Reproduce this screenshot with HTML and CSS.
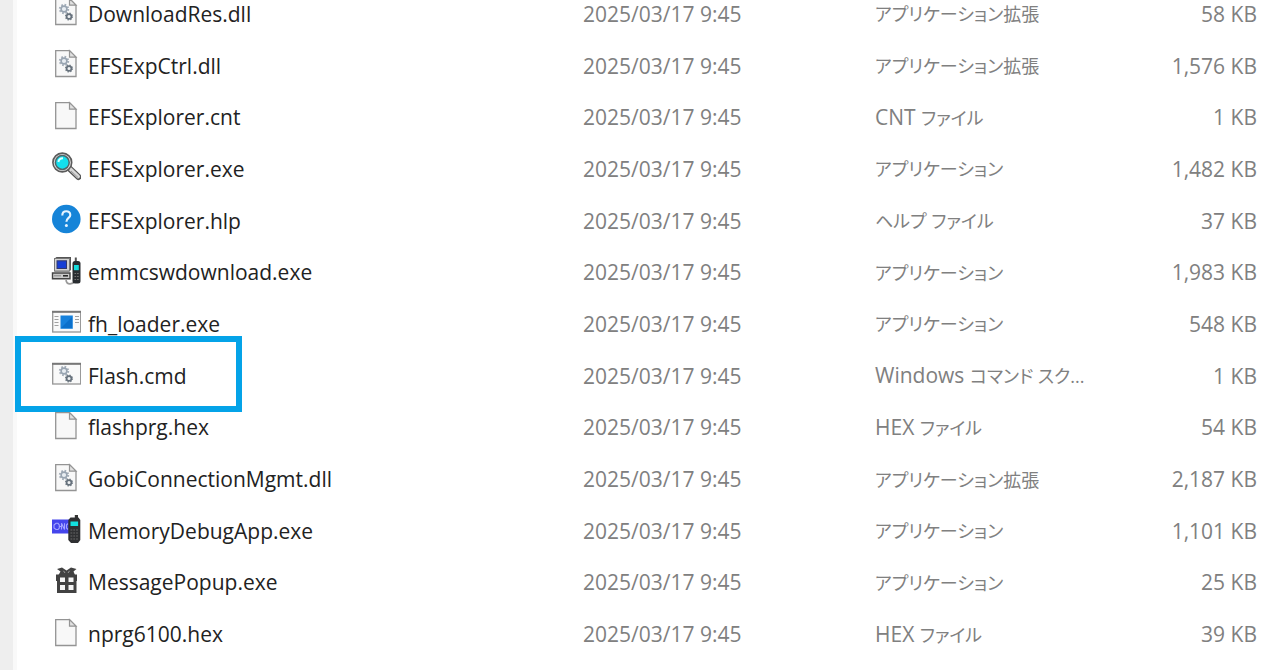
FILE: index.html
```html
<!DOCTYPE html>
<html lang="ja">
<head>
    <meta charset="UTF-8">
    <meta name="viewport" content="width=device-width, initial-scale=1.0">
    <title>Files</title>
    <link rel="stylesheet" href="styles.css">
</head>
<body>
    <!-- shared icons -->
    <svg class="sprite" aria-hidden="true">
        <symbol id="gears" viewBox="0 0 30 30">
            <circle cx="13" cy="12" r="4.2" fill="none" stroke="#a3adb8" stroke-width="2" stroke-dasharray="1.65 1.65"/>
            <circle cx="13" cy="12" r="2.9" fill="#e8edf2" stroke="#98a4b1" stroke-width="1.6"/>
            <circle cx="18" cy="19.5" r="3.3" fill="none" stroke="#7b848d" stroke-width="1.6" stroke-dasharray="1.3 1.3"/>
            <circle cx="18" cy="19.5" r="2.4" fill="#eef0f2" stroke="#66717c" stroke-width="1.7"/>
        </symbol>
        <symbol id="doc" viewBox="0 0 30 30">
            <path d="M4.7 1.6H18.5L25 8.2V27.5H4.7Z" fill="#f8f8f8" stroke="#949494" stroke-width="1.3"/>
            <path d="M18.5 1.6V8.2H25Z" fill="#e2e2e2" stroke="#949494" stroke-width="1.2"/>
        </symbol>
        <symbol id="dll" viewBox="0 0 30 30">
            <use href="#doc"/>
            <use href="#gears"/>
        </symbol>
        <symbol id="window" viewBox="0 0 30 30">
            <rect x="1.7" y="4.6" width="28" height="20.4" fill="#f9f9f9" stroke="#959595" stroke-width="1.3"/>
            <path d="M1 4.8H30.3" stroke="#777" stroke-width="2"/>
        </symbol>
        <symbol id="cmd" viewBox="0 0 30 30">
            <use href="#window"/>
            <use href="#gears"/>
        </symbol>
        <symbol id="exe" viewBox="0 0 30 30">
            <use href="#window"/>
            <rect x="9.5" y="8.5" width="12.3" height="13.3" fill="#1681dc"/>
            <path d="M10 21L21 10V21Z" fill="#0b70cb"/>
            <path d="M3.5 9.5H7.5M3.5 12.5H7.5M3.5 15.5H7.5M3.5 18.5H7.5M24 9.5H28M24 12.5H28M24 15.5H28" stroke="#a0a0a0" stroke-width="1.2"/>
        </symbol>
        <symbol id="magnifier" viewBox="0 0 30 30">
            <path d="M18 16L27.5 25" stroke="#555" stroke-width="6" stroke-linecap="round"/>
            <path d="M18.3 16L27.2 24.6" stroke="#d8d8d8" stroke-width="3.6" stroke-linecap="round"/>
            <path d="M20 19L27 25.5" stroke="#999" stroke-width="1"/>
            <circle cx="11.3" cy="10.5" r="9.4" fill="#ddd" stroke="#5b5b5b" stroke-width="1.6"/>
            <circle cx="11.3" cy="10.5" r="6.9" fill="#12dfee" stroke="#50666a" stroke-width="1.5"/>
            <path d="M7.4 10A4.5 4.5 0 0 1 12 6.3" fill="none" stroke="#d8ffff" stroke-width="2"/>
        </symbol>
        <symbol id="help" viewBox="0 0 30 30">
            <circle cx="15.3" cy="15" r="14.3" fill="#1684d8"/>
            <path d="M11.3 11.4C11.3 5.9 19.3 6.1 19.3 10.9C19.3 13.9 15.4 14 15.4 17.8" fill="none" stroke="#e4f3ff" stroke-width="2.1"/>
            <circle cx="15.4" cy="21.5" r="1.5" fill="#e4f3ff"/>
        </symbol>
        <symbol id="computer" viewBox="0 0 30 30">
            <path d="M3.5 2.5L5.5 1H20V14L18 15.5H3.5Z" fill="#555"/>
            <rect x="3.5" y="2.5" width="15" height="12.5" fill="#d3d3d3" stroke="#777"/>
            <rect x="6" y="4.8" width="9.5" height="7.7" fill="#173fd6" stroke="#333a70"/>
            <path d="M1.5 17H19V22.7H1.5Z" fill="#c9c9c9" stroke="#444" stroke-width="1.4"/>
            <path d="M3 19.8H10" stroke="#888"/>
            <path d="M12 19.8H17" stroke="#222" stroke-width="1.5"/>
            <path d="M15 24C16 30 22 28 24 25" fill="none" stroke="#999" stroke-width="1.7"/>
            <path d="M24.8 1.5V6" stroke="#555" stroke-width="2"/>
            <rect x="21.5" y="5" width="8" height="22.5" rx="2.5" fill="#292d31"/>
            <rect x="23" y="9" width="4.8" height="5.2" fill="#15dddd"/>
            <path d="M23.5 17.5H28M23.5 20.5H28M23.5 23.5H28" stroke="#747474" stroke-dasharray="1.6 1"/>
        </symbol>
        <symbol id="phone" viewBox="0 0 30 30">
            <rect x="1" y="5.5" width="17" height="14" fill="#4545ec"/>
            <path d="M3 11L5 9.3H7L8.3 11V14L7 15.5H5L3 14ZM10.5 15.5V9.3L13.5 15.5V9.3M17 9.5L15.5 11V14L17 15.5M8.3 12.5H10" fill="none" stroke="#a4a4ff" stroke-width="1.1"/>
            <path d="M23.8 1H27V7H23.8Z" fill="#333"/>
            <path d="M19.5 3.5H27.5L29.3 6V26L27 29H20L17.3 26V6Z" fill="#2f3032"/>
            <rect x="19.5" y="7.5" width="7.6" height="4.5" fill="#13e0df"/>
            <path d="M19.5 16H27.2M19.5 19H27.2M19.5 22H27.2M19.5 25H27.2" stroke="#686868" stroke-width="1.2" stroke-dasharray="1.8 1"/>
        </symbol>
        <symbol id="gift" viewBox="0 0 30 30">
            <path d="M5 8.5H26V15H25.5V27H6V15H5Z" fill="#424242"/>
            <path d="M6 3L11 1.5L15.5 4.5L20 1.5L25.5 3L22.5 5.5L24 9H7.5L9.5 5.5Z" fill="#424242"/>
            <path d="M12.5 4.8L14 7M18.5 4.8L17 7" stroke="#999" stroke-width="1"/>
            <path d="M9 11.5H14V16H9ZM17.5 11.5H22.5V16H17.5ZM9 19H14V24H9ZM17.5 19H22.5V24H17.5Z" fill="#f5f5f5"/>
        </symbol>
    </svg>

    <div class="explorer">
        <div class="nav-edge"></div>
        <main class="file-list">
            <table class="file-table">
                <colgroup>
                    <col>
                    <col class="col-date">
                    <col class="col-type">
                    <col class="col-size">
                </colgroup>
                <tbody>
                    <tr>
                        <td><div class="file-name"><svg class="icon"><use href="#dll"/></svg><span>DownloadRes.dll</span></div></td>
                        <td>2025/03/17 9:45</td>
                        <td><span class="kana">アプリケーション拡張</span></td>
                        <td class="size">58 KB</td>
                    </tr>
                    <tr>
                        <td><div class="file-name"><svg class="icon"><use href="#dll"/></svg><span>EFSExpCtrl.dll</span></div></td>
                        <td>2025/03/17 9:45</td>
                        <td><span class="kana">アプリケーション拡張</span></td>
                        <td class="size">1,576 KB</td>
                    </tr>
                    <tr>
                        <td><div class="file-name"><svg class="icon"><use href="#doc"/></svg><span>EFSExplorer.cnt</span></div></td>
                        <td>2025/03/17 9:45</td>
                        <td>CNT <span class="kana">ファイル</span></td>
                        <td class="size">1 KB</td>
                    </tr>
                    <tr>
                        <td><div class="file-name"><svg class="icon"><use href="#magnifier"/></svg><span>EFSExplorer.exe</span></div></td>
                        <td>2025/03/17 9:45</td>
                        <td><span class="kana">アプリケーション</span></td>
                        <td class="size">1,482 KB</td>
                    </tr>
                    <tr>
                        <td><div class="file-name"><svg class="icon"><use href="#help"/></svg><span>EFSExplorer.hlp</span></div></td>
                        <td>2025/03/17 9:45</td>
                        <td><span class="kana">ヘルプ ファイル</span></td>
                        <td class="size">37 KB</td>
                    </tr>
                    <tr>
                        <td><div class="file-name"><svg class="icon"><use href="#computer"/></svg><span>emmcswdownload.exe</span></div></td>
                        <td>2025/03/17 9:45</td>
                        <td><span class="kana">アプリケーション</span></td>
                        <td class="size">1,983 KB</td>
                    </tr>
                    <tr>
                        <td><div class="file-name"><svg class="icon"><use href="#exe"/></svg><span>fh_loader.exe</span></div></td>
                        <td>2025/03/17 9:45</td>
                        <td><span class="kana">アプリケーション</span></td>
                        <td class="size">548 KB</td>
                    </tr>
                    <tr>
                        <td><div class="file-name marked"><svg class="icon"><use href="#cmd"/></svg><span>Flash.cmd</span></div></td>
                        <td>2025/03/17 9:45</td>
                        <td>Windows <span class="kana">コマンド スク...</span></td>
                        <td class="size">1 KB</td>
                    </tr>
                    <tr>
                        <td><div class="file-name"><svg class="icon"><use href="#doc"/></svg><span>flashprg.hex</span></div></td>
                        <td>2025/03/17 9:45</td>
                        <td>HEX <span class="kana">ファイル</span></td>
                        <td class="size">54 KB</td>
                    </tr>
                    <tr>
                        <td><div class="file-name"><svg class="icon"><use href="#dll"/></svg><span>GobiConnectionMgmt.dll</span></div></td>
                        <td>2025/03/17 9:45</td>
                        <td><span class="kana">アプリケーション拡張</span></td>
                        <td class="size">2,187 KB</td>
                    </tr>
                    <tr>
                        <td><div class="file-name"><svg class="icon"><use href="#phone"/></svg><span>MemoryDebugApp.exe</span></div></td>
                        <td>2025/03/17 9:45</td>
                        <td><span class="kana">アプリケーション</span></td>
                        <td class="size">1,101 KB</td>
                    </tr>
                    <tr>
                        <td><div class="file-name"><svg class="icon"><use href="#gift"/></svg><span>MessagePopup.exe</span></div></td>
                        <td>2025/03/17 9:45</td>
                        <td><span class="kana">アプリケーション</span></td>
                        <td class="size">25 KB</td>
                    </tr>
                    <tr>
                        <td><div class="file-name"><svg class="icon"><use href="#doc"/></svg><span>nprg6100.hex</span></div></td>
                        <td>2025/03/17 9:45</td>
                        <td>HEX <span class="kana">ファイル</span></td>
                        <td class="size">39 KB</td>
                    </tr>
                </tbody>
            </table>
        </main>
    </div>
</body>
</html>
```

FILE: styles.css
```css
* {
    box-sizing: border-box;
    margin: 0;
    padding: 0;
}

body {
    font-family: "Open Sans", "Noto Sans CJK JP", sans-serif;
    font-size: 21px;
    line-height: 30px;
    font-feature-settings: "palt";
    color: #2b2b2b;
    background-color: #fff;
}

.sprite {
    display: none;
}

.explorer {
    display: flex;
    height: 100vh;
    overflow: hidden;
}

.nav-edge {
    width: 17px;
    flex-shrink: 0;
    background-color: #eee;
    border-right: 4px solid #f9f9f9;
}

/* the list is scrolled a little past the top of its first row */
.file-list {
    flex: 1;
    margin-top: -12px;
}

.file-table {
    width: 100%;
    height: 672px;
    table-layout: fixed;
    border-collapse: collapse;
}

.col-date,
.col-type {
    width: 292px;
}

.col-size {
    width: 113px;
}

td {
    color: #808080;
    white-space: nowrap;
    vertical-align: middle;
}

/* kana runs wide next to the latin text */
.kana {
    font-size: 18px;
}

.size {
    padding-right: 23px;
    text-align: right;
}

.file-name {
    display: flex;
    align-items: center;
    gap: 7px;
    padding-left: 34px;
    color: #222;
}

.icon {
    width: 30px;
    height: 30px;
    margin-bottom: 3px;
    flex-shrink: 0;
}

/* callout frame around the file to open */
.marked {
    position: relative;
}

.marked::after {
    content: "";
    box-sizing: border-box;
    position: absolute;
    top: -23px;
    left: -2px;
    width: 227px;
    height: 76px;
    border: 6px solid #04a3e8;
}
```
